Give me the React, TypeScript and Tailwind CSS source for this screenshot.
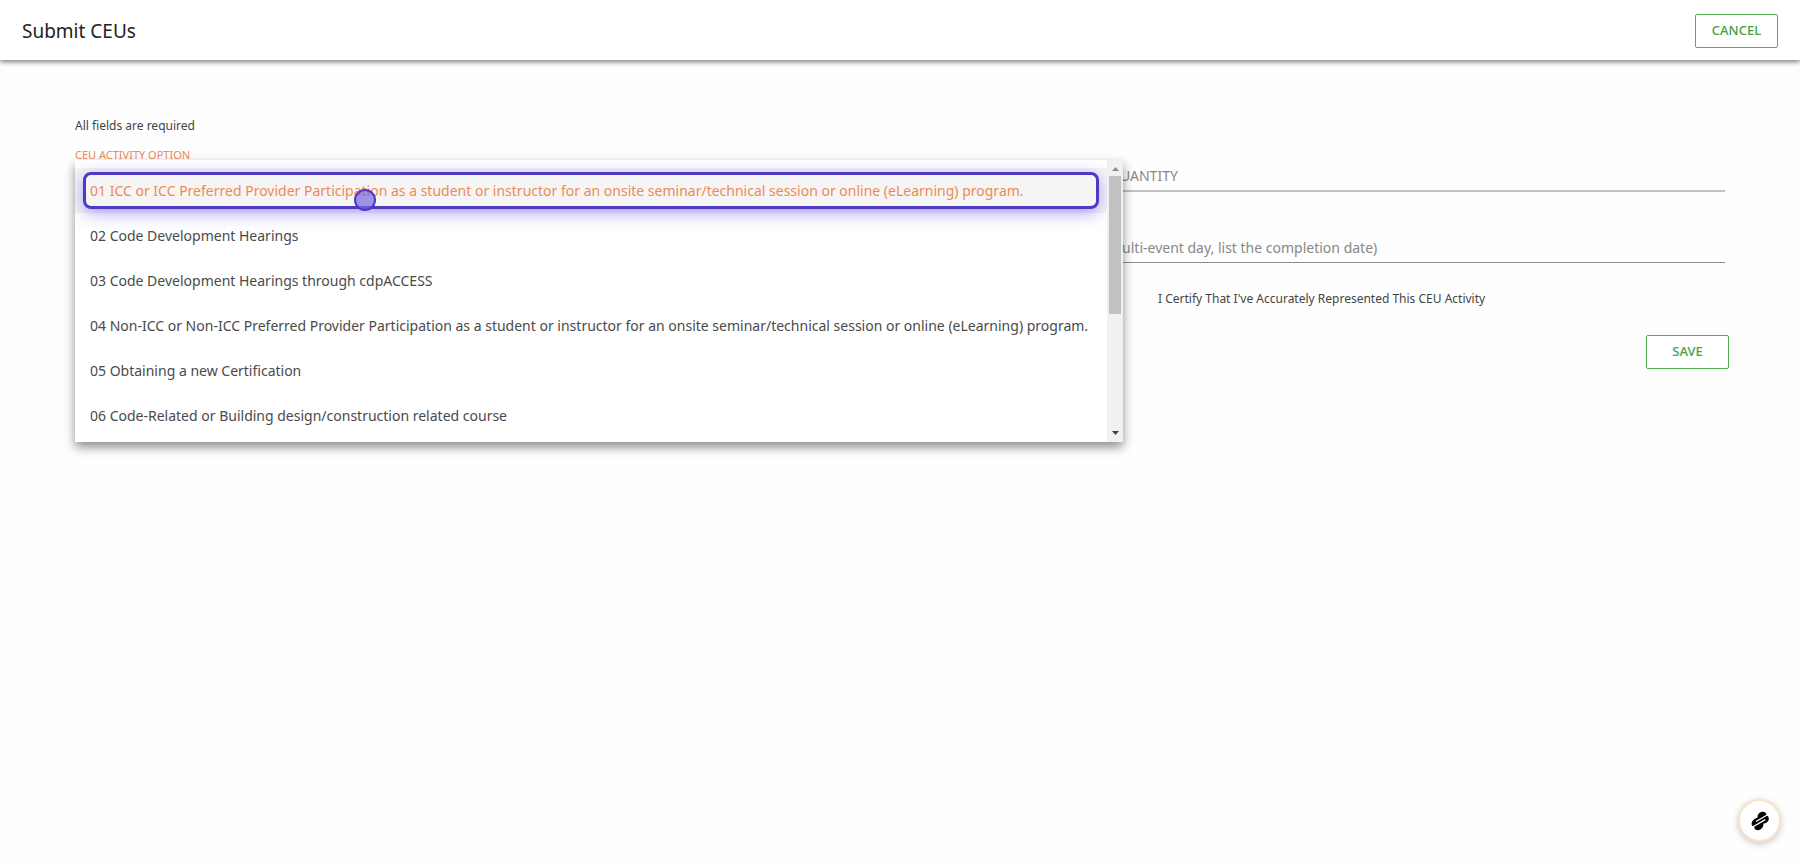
const options = [
  "01 ICC or ICC Preferred Provider Participation as a student or instructor for an onsite seminar/technical session or online (eLearning) program.",
  "02 Code Development Hearings",
  "03 Code Development Hearings through cdpACCESS",
  "04 Non-ICC or Non-ICC Preferred Provider Participation as a student or instructor for an onsite seminar/technical session or online (eLearning) program.",
  "05 Obtaining a new Certification",
  "06 Code-Related or Building design/construction related course",
];

const outlineButton =
  "flex h-[34px] w-[83px] items-center justify-center rounded-[2px] border border-[#4caf50] bg-white text-[13px] font-medium text-[#43a047]";

function Header() {
  return (
    <header className="relative flex h-[60px] items-center justify-between bg-white px-[22px] pt-[2px] shadow-[0_2px_5px_rgba(0,0,0,0.5)]">
      <h1 className="text-[19px] font-normal leading-6 text-[#222]">Submit CEUs</h1>
      <button type="button" className={outlineButton}>
        CANCEL
      </button>
    </header>
  );
}

function Scrollbar() {
  return (
    <div className="flex w-4 shrink-0 flex-col items-center bg-[#f1f1f1]" aria-hidden="true">
      <svg className="h-4 w-4 shrink-0" viewBox="0 0 16 16">
        <path d="M5 11h7L8.500 7z" fill="#8c8c8c" />
      </svg>
      <div className="h-[138px] w-3 bg-[#c1c1c1]" />
      <svg className="mt-auto h-4 w-4 shrink-0" viewBox="0 0 16 16">
        <path d="M5 5h7L8.500 9z" fill="#404040" />
      </svg>
    </div>
  );
}

function OptionPanel() {
  return (
    <div className="absolute left-0 -top-px z-10 flex h-[282px] w-[1048px] bg-white shadow-[0_5px_10px_rgba(0,0,0,0.45)]">
      <ul
        id="activity-options"
        role="listbox"
        aria-labelledby="activity-label"
        className="min-w-0 flex-1 overflow-hidden pt-2"
      >
        {options.map((option, i) => (
          <li
            key={option}
            role="option"
            aria-selected={i === 0}
            className={
              i === 0
                ? "relative flex h-[45px] items-center whitespace-nowrap bg-[#f5f5f5] px-[15px] text-[14px] text-[#ee8a57]"
                : "flex h-[45px] items-center whitespace-nowrap px-[15px] text-[14px] text-[#4a4a4a]"
            }
          >
            {option}
            {i === 0 && (
              <>
                <span className="absolute inset-x-2 inset-y-1 rounded-lg border-3 border-[#4a3ac4] shadow-[0_4px_16px_rgba(92,72,240,0.5)]" />
                <span className="absolute left-[279px] top-[21px] h-[22px] w-[22px] rounded-full border-2 border-[#4a3ac4] bg-[#7968dd]/70" />
              </>
            )}
          </li>
        ))}
      </ul>
      <Scrollbar />
    </div>
  );
}

export default function App() {
  return (
    <div className="relative min-h-screen bg-[#fefefe] font-['Noto_Sans','Open_Sans',sans-serif]">
      <Header />
      <main className="px-[75px] pt-14">
        <p className="text-[12px] leading-5 text-[#444]">All fields are required</p>
        <form className="relative">
          <label
            id="activity-label"
            htmlFor="activity"
            className="mt-[13px] block text-[11px] leading-3 text-[#ee8a57]"
          >
            CEU ACTIVITY OPTION
          </label>
          <div className="relative">
            <button
              id="activity"
              type="button"
              aria-haspopup="listbox"
              aria-expanded="true"
              aria-controls="activity-options"
              className="absolute left-0 top-0 h-7 w-[1000px]"
            />
            <OptionPanel />
            <div className="ml-[1034px] flex flex-col">
              <input
                aria-label="Quantity"
                placeholder="QUANTITY"
                className="h-[31px] border-b-2 border-[#c2c2c2] bg-transparent text-[14px] text-[#444] outline-none placeholder:text-[#888]"
              />
              <input
                aria-label="Completion date"
                placeholder="multi-event day, list the completion date)"
                className="mt-10 h-[31px] border-b border-[#8c8c8c] bg-transparent text-[14px] text-[#444] outline-none placeholder:text-[#888]"
              />
              <label className="mt-6 flex items-center gap-9 text-[12px] leading-6 text-[#444]">
                <input type="checkbox" className="h-[13px] w-[13px]" />
                I Certify That I've Accurately Represented This CEU Activity
              </label>
            </div>
          </div>
          <div className="-mr-1 mt-6 flex justify-end">
            <button type="submit" className={outlineButton}>
              SAVE
            </button>
          </div>
        </form>
      </main>
      <button
        type="button"
        aria-label="Open assistant"
        className="fixed bottom-5 right-[19px] flex h-[43px] w-[43px] items-center justify-center rounded-full border-2 border-[#f8e3c8] bg-white shadow-[0_2px_7px_rgba(0,0,0,0.22)]"
      >
        <svg className="h-5 w-5" viewBox="0 0 20 20">
          <path
            d="M7.600 6.500C7.400 3 10 .7 13 .8c2.200.1 3.600 1.600 3.600 3.400 1.700.8 2.500 2.300 2.200 4-.4 2.700-2.700 4.200-5.400 4.300.3 3.900-2.600 6.800-5.700 6.700-2.200-.1-3.400-1.500-3.500-3.200C2.300 15.300 1.400 13.900 1.600 12.200 2 9.400 4.700 7.500 7.600 6.500z"
            fill="#000"
          />
          <path d="M18.500 3.300 6 10.500M15.300 8.600 2.600 16" stroke="#fff" strokeWidth="1.300" />
        </svg>
      </button>
    </div>
  );
}
